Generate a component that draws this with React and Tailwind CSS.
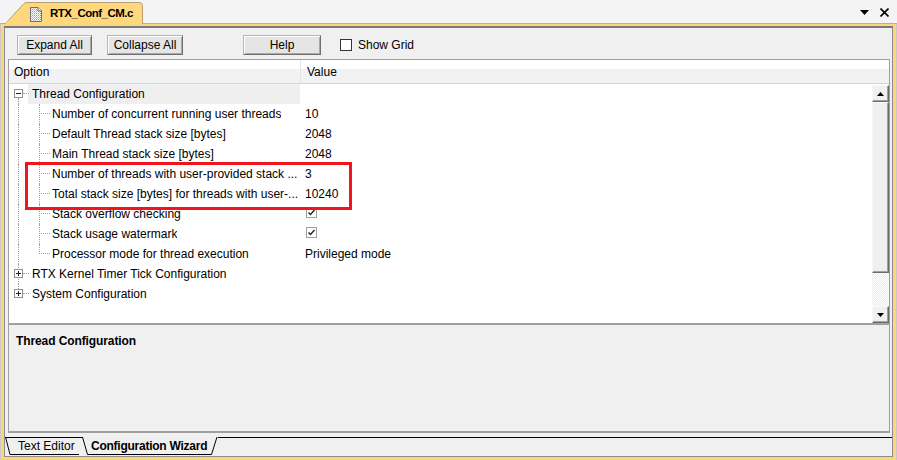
import React from 'react';

const rows = [
    { level: 0, label: 'Thread Configuration', open: true, hot: true },
    { level: 1, label: 'Number of concurrent running user threads', value: '10' },
    { level: 1, label: 'Default Thread stack size [bytes]', value: '2048' },
    { level: 1, label: 'Main Thread stack size [bytes]', value: '2048' },
    { level: 1, label: 'Number of threads with user-provided stack ...', value: '3' },
    { level: 1, label: 'Total stack size [bytes] for threads with user-...', value: '10240' },
    { level: 1, label: 'Stack overflow checking', check: true },
    { level: 1, label: 'Stack usage watermark', check: true },
    { level: 1, label: 'Processor mode for thread execution', value: 'Privileged mode', lastChild: true },
    { level: 0, label: 'RTX Kernel Timer Tick Configuration', open: false },
    { level: 0, label: 'System Configuration', open: false, lastRoot: true },
];

const dot = 'border-[#a0a0a0] border-dotted';

const Expander = ({ open }) => (
    <div className="absolute left-[5px] top-[5px] w-[9px] h-[9px] border border-[#919191] bg-white flex items-center justify-center">
        <div className="w-[5px] h-px bg-[#222]" />
        {!open && <div className="absolute w-px h-[5px] bg-[#222]" />}
    </div>
);

const CheckBox = () => (
    <div className="mt-[-3px] ml-[1px] w-[11px] h-[11px] border border-[#a0a0a0] bg-white flex items-center justify-center">
        <svg width="7" height="7" viewBox="0 0 7 7">
            <path d="M0.5 3.5 L2.5 5.5 L6.5 1" stroke="#222" strokeWidth="1.4" fill="none" />
        </svg>
    </div>
);

const Row = ({ row }) => {
    const root = row.level === 0;
    return (
        <div className="relative flex h-[20px] items-center">
            {/* tree connectors */}
            {root && row.open && <div className={`absolute left-[9px] top-[14px] bottom-0 border-l ${dot}`} />}
            {root && !row.open && !row.lastRoot && <div className={`absolute left-[9px] top-0 bottom-0 border-l ${dot}`} />}
            {root && row.lastRoot && <div className={`absolute left-[9px] top-0 h-[5px] border-l ${dot}`} />}
            {root && <div className={`absolute left-[14px] top-[9px] w-[6px] border-t ${dot}`} />}
            {root && <Expander open={row.open} />}
            {!root && <div className={`absolute left-[9px] top-0 bottom-0 border-l ${dot}`} />}
            {!root && <div className={`absolute left-[30px] top-0 ${row.lastChild ? 'h-[10px]' : 'bottom-0'} border-l ${dot}`} />}
            {!root && <div className={`absolute left-[30px] top-[9px] w-[11px] border-t ${dot}`} />}

            <div className={`w-[296px] shrink-0 h-full flex items-center ${root ? 'pl-[19px]' : 'pl-[43px]'}`}>
                <div className={`h-full flex items-center whitespace-nowrap overflow-hidden ${root ? 'pl-[4px] pr-2' : ''} ${row.hot ? 'bg-[#efefef] w-[272px]' : ''}`}>
                    {row.label}
                </div>
            </div>
            <div className="flex-1 flex items-center">
                {row.check ? <CheckBox /> : row.value}
            </div>
        </div>
    );
};

const Button = ({ children, className }) => (
    <button className={`h-[20px] bg-[#e5e5e5] border border-[#b5b5b5] border-b-[#6f6f6f] border-r-[#6f6f6f] shadow-[inset_1px_1px_0_#fff,inset_-1px_-1px_0_#a8a8a8] text-[12px] ${className}`}>
        {children}
    </button>
);

const FileIcon = () => (
    <svg width="12" height="15" viewBox="0 0 12 15">
        <defs>
            <pattern id="dith" width="2" height="2" patternUnits="userSpaceOnUse">
                <rect width="2" height="2" fill="#fff" />
                <rect width="1" height="1" fill="#9a9a9a" />
                <rect x="1" y="1" width="1" height="1" fill="#c8c8c8" />
            </pattern>
        </defs>
        <path d="M0.5 0.5 H8 L11.5 4 V14.5 H0.5 Z" fill="url(#dith)" stroke="#6f6f6f" />
        <path d="M8 0.5 V4 H11.5" fill="#fff" stroke="#6f6f6f" />
    </svg>
);

export default function App() {
    return (
        <div className="w-[897px] h-[460px] overflow-hidden bg-[#f0f0f0] text-[12px] text-black font-['Liberation_Sans',Arial,sans-serif]">
            {/* document tab strip */}
            <div className="h-[24px] bg-[#f4f4f4] border-b border-[#b0b0b0] flex items-end relative">
                <div className="relative ml-[5px] w-[138px] h-[22px] mb-[-1px] flex items-center">
                    <svg className="absolute inset-0" width="138" height="22" viewBox="0 0 138 22">
                        <path d="M0 22 L19 1.5 Q20 0.5 22 0.5 H134 Q137.5 0.5 137.5 4 V22 Z" fill="#ffd87d" stroke="#b4a073" />
                        <rect x="1" y="20" width="136" height="2" fill="#ffd87d" />
                    </svg>
                    <div className="relative flex items-center pl-[25px] gap-[8px] pt-[2px]">
                        <FileIcon />
                        <span className="font-bold text-[11.5px] tracking-[-0.5px]">RTX_Conf_CM.c</span>
                    </div>
                </div>
                <div className="ml-auto mb-[6px] mr-[8px] flex items-center gap-[11px]">
                    <svg width="9" height="5" viewBox="0 0 9 5"><path d="M0 0 H9 L4.5 5 Z" fill="#000" /></svg>
                    <svg width="9" height="9" viewBox="0 0 9 9"><path d="M0.5 0.5 L8.5 8.5 M8.5 0.5 L0.5 8.5" stroke="#000" strokeWidth="1.6" /></svg>
                </div>
            </div>

            {/* yellow frame */}
            <div className="h-[436px] mx-[1px] border-x-[3px] border-b-[3px] border-t-2 border-[#fcd67d] shadow-[0_0_0_1px_#c8c8c8]">
                <div className="h-full border border-[#8c8c8c] border-t-2 border-t-[#7a7a7a] flex flex-col pl-[3px] pr-[2px]">
                    {/* toolbar */}
                    <div className="h-[31px] shrink-0 flex items-start pt-[7px]">
                        <Button className="ml-[9px] w-[75px]">Expand All</Button>
                        <Button className="ml-[15px] w-[76px]">Collapse All</Button>
                        <Button className="ml-[60px] w-[78px]">Help</Button>
                        <label className="ml-[19px] flex items-center h-[20px] gap-[6px]">
                            <span className="w-[12px] h-[12px] border border-[#333] bg-white" />
                            <span>Show Grid</span>
                        </label>
                    </div>

                    {/* property grid */}
                    <div className="h-[265px] shrink-0 border border-[#a0a0a0] bg-white flex flex-col relative">
                        <div className="h-[24px] shrink-0 flex items-center border-b border-[#d5d5d5] bg-[linear-gradient(#ffffff_0%,#ffffff_38%,#f1f2f4_38%,#f1f2f4_100%)]">
                            <div className="w-[292px] pl-[5px] pt-[1px] border-r border-[#e4e4e4] h-full flex items-center">Option</div>
                            <div className="pl-[6px] pt-[1px]">Value</div>
                        </div>
                        <div className="flex-1 flex">
                            <div className="flex-1">
                                {rows.map((r) => <Row key={r.label} row={r} />)}
                            </div>
                            {/* scrollbar */}
                            <div className="w-[17px] shrink-0 pt-[1px] flex flex-col">
                                <div className="h-[17px] bg-[#f0f0f0] border border-[#f8f8f8] border-r-[#6d6d6d] border-b-[#6d6d6d] shadow-[inset_-1px_-1px_0_#a0a0a0] flex items-center justify-center">
                                    <svg width="7" height="4" viewBox="0 0 7 4"><path d="M0 4 H7 L3.5 0 Z" fill="#000" /></svg>
                                </div>
                                <div className="h-[171px] bg-[#f0f0f0] border border-[#f8f8f8] border-r-[#6d6d6d] border-b-[#6d6d6d] shadow-[inset_-1px_-1px_0_#a0a0a0]" />
                                <div className="h-[33px] bg-[repeating-conic-gradient(#ffffff_0%_25%,#ebebeb_0%_50%)] bg-[length:2px_2px]" />
                                <div className="h-[17px] bg-[#f0f0f0] border border-[#f8f8f8] border-r-[#6d6d6d] border-b-[#6d6d6d] shadow-[inset_-1px_-1px_0_#a0a0a0] flex items-center justify-center">
                                    <svg width="7" height="4" viewBox="0 0 7 4"><path d="M0 0 H7 L3.5 4 Z" fill="#000" /></svg>
                                </div>
                            </div>
                        </div>
                        {/* highlight box */}
                        <div className="absolute left-[16px] top-[102px] w-[327px] h-[48px] border-[3px] border-[#f0141c] pointer-events-none" />
                    </div>

                    {/* description */}
                    <div className="h-[109px] shrink-0 border border-[#a0a0a0] border-b-2 bg-[#f0f0f0] pl-[7px] pt-[7px]">
                        <span className="font-bold tracking-[-0.1px]">Thread Configuration</span>
                    </div>

                    {/* bottom tabs */}
                    <div className="flex-1 flex items-start pt-[4px] ml-[-3px] mr-[-2px]">
                        <div className="relative w-[78px] h-[18px] flex items-center pl-[13px]">
                            <svg className="absolute inset-0" width="78" height="18" viewBox="0 0 78 18">
                                <path d="M0.5 0.5 H78 M0.5 0 L5 17.5 H74" stroke="#000" fill="none" />
                            </svg>
                            <span className="relative">Text Editor</span>
                        </div>
                        <div className="relative w-[136px] h-[18px] flex items-center pl-[9px] ml-[-1px]">
                            <svg className="absolute inset-0" width="136" height="18" viewBox="0 0 136 18">
                                <path d="M0.5 0 L5.5 17.5 H129.5 L135 0" stroke="#000" fill="#f0f0f0" />
                            </svg>
                            <span className="relative font-bold tracking-[-0.25px]">Configuration Wizard</span>
                        </div>
                        <div className="flex-1 h-[18px] border-t border-black" />
                    </div>
                </div>
            </div>
        </div>
    );
}
